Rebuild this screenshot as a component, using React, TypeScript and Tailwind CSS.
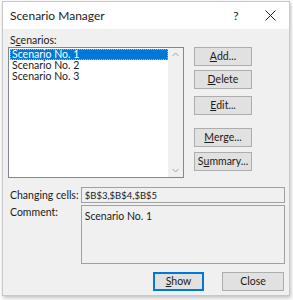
import React from "react";

const font = { fontFamily: 'Lato, "Noto Sans", sans-serif' };

function Btn({ children, className = "" }: { children: React.ReactNode; className?: string }) {
  return (
    <div
      className={
        "flex items-center justify-center h-[19px] bg-[#e1e1e1] border border-[#adadad] text-[10.5px] text-[#1a1a1a] " +
        className
      }
    >
      {children}
    </div>
  );
}

export default function App() {
  return (
    <div className="w-[293px] h-[300px] bg-white relative" style={font}>
      <div className="absolute left-[2px] top-[1px] w-[288px] h-[295px] border border-[#c8c8c8] bg-[#f0f0f0] shadow-[1px_2px_4px_rgba(0,0,0,0.25)] flex flex-col">
        {/* title bar */}
        <div className="h-[27px] bg-white flex items-center pl-[7px] pr-[10px] text-[12px] text-[#1a1a1a]">
          <span className="flex-1">Scenario Manager</span>
          <span className="w-[14px] text-center mr-[22px] text-[12px]">?</span>
          <svg width="11" height="11" viewBox="0 0 11 11" className="mr-[3px]">
            <path d="M0.5 0.5 L10.5 10.5 M10.5 0.5 L0.5 10.5" stroke="#1a1a1a" strokeWidth="1" />
          </svg>
        </div>

        <div className="pl-[5px] pr-[4px] pt-[3px] text-[10.5px] text-[#1a1a1a] leading-[13px]">
          <div className="pl-[2px] h-[15px] pt-[2px]">
            S<span className="underline">c</span>enarios:
          </div>

          <div className="flex">
            {/* list */}
            <div className="w-[176px] h-[131px] border border-[#828790] bg-white flex">
              <div className="flex-1 pt-[1px] pl-[1px]">
                <div className="bg-[#0078d7] text-white h-[11px] leading-[11px] pl-[2px] outline-1 outline-dotted outline-[#f0a060] -outline-offset-1">
                  Scenario No. 1
                </div>
                <div className="h-[11px] leading-[11px] pl-[2px]">Scenario No. 2</div>
                <div className="h-[11px] leading-[11px] pl-[2px]">Scenario No. 3</div>
              </div>
              <div className="w-[15px] bg-[#f0f0f0] flex flex-col justify-between items-center py-[4px]">
                <svg width="7" height="5" viewBox="0 0 7 5">
                  <path d="M0.5 4 L3.5 1 L6.5 4" fill="none" stroke="#a0a0a0" strokeWidth="1" />
                </svg>
                <svg width="7" height="5" viewBox="0 0 7 5">
                  <path d="M0.5 1 L3.5 4 L6.5 1" fill="none" stroke="#a0a0a0" strokeWidth="1" />
                </svg>
              </div>
            </div>

            {/* buttons */}
            <div className="ml-[10px] w-[58px] flex flex-col">
              <Btn>
                <span className="underline">A</span>dd...
              </Btn>
              <Btn className="mt-[4px]">
                <span className="underline">D</span>elete
              </Btn>
              <Btn className="mt-[7px]">
                <span className="underline">E</span>dit...
              </Btn>
              <Btn className="mt-[13px]">
                <span className="underline">M</span>erge...
              </Btn>
              <Btn className="mt-[5px]">
                S<span className="underline">u</span>mmary...
              </Btn>
            </div>
          </div>

          {/* changing cells */}
          <div className="flex items-center mt-[9px]">
            <div className="w-[73px] pl-[2px] whitespace-nowrap">Changing cells:</div>
            <div className="w-[205px] h-[16px] border border-[#a0a0a0] flex items-center pl-[3px] text-[9.5px]">
              $B$3,$B$4,$B$5
            </div>
          </div>

          <div className="flex mt-[2px]">
            <div className="w-[73px] pl-[2px] pt-[1px]">Comment:</div>
            <div className="w-[205px] h-[59px] border border-[#a0a0a0] pl-[3px] pt-[4px]">Scenario No. 1</div>
          </div>

          <div className="flex justify-end mt-[8px] pr-[1px]">
            <div className="w-[51px] h-[19px] flex items-center justify-center bg-[#e1e1e1] border-2 border-[#0078d7]">
              <span className="underline">S</span>how
            </div>
            <Btn className="w-[62px] ml-[18px]">Close</Btn>
          </div>
        </div>
      </div>
    </div>
  );
}
